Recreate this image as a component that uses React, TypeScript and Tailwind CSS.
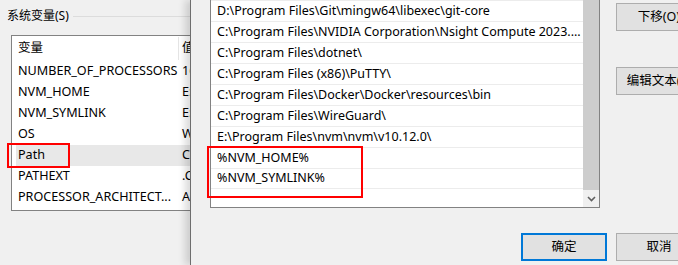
// Windows environment variables: system list behind, Path editor dialog in front
const FONT = {
  fontFamily: '"Noto Sans", "Noto Sans CJK SC", sans-serif',
};

const sysVars = [
  { name: "NUMBER_OF_PROCESSORS", value: "16" },
  { name: "NVM_HOME", value: "E:\\Program Files\\nvm\\nvm" },
  { name: "NVM_SYMLINK", value: "E:\\Program Files\\nodejs" },
  { name: "OS", value: "Windows_NT" },
  { name: "Path", value: "C:\\Windows\\system32;C:\\Windows" },
  { name: "PATHEXT", value: ".COM;.EXE;.BAT;.CMD" },
  { name: "PROCESSOR_ARCHITECT...", value: "AMD64" },
];

const paths = [
  "D:\\Program Files\\Git\\mingw64\\libexec\\git-core",
  "C:\\Program Files\\NVIDIA Corporation\\Nsight Compute 2023....",
  "C:\\Program Files\\dotnet\\",
  "C:\\Program Files (x86)\\PuTTY\\",
  "C:\\Program Files\\Docker\\Docker\\resources\\bin",
  "C:\\Program Files\\WireGuard\\",
  "E:\\Program Files\\nvm\\nvm\\v10.12.0\\",
  "%NVM_HOME%",
  "%NVM_SYMLINK%",
];

function SystemVariables() {
  return (
    <div className="pt-[8px] pl-[7px]">
      <div className="flex items-center">
        <span className="text-[12px] leading-[16px] text-black">系统变量(S)</span>
        <div className="ml-[4px] h-px flex-1 bg-[#dcdcdc]" />
      </div>
      <div className="mt-[11px] ml-[4px] h-[176px] w-[420px] border border-[#828282] bg-white">
        <div className="flex h-[25px] items-center text-[12.5px] text-black">
          <div className="flex h-[23px] w-[167px] items-center border-r border-[#e5e5e5] pl-[6px]">
            变量
          </div>
          <div className="pl-[3px]">值</div>
        </div>
        {sysVars.map((v) => (
          <div
            key={v.name}
            className={`ml-[4px] flex h-[21px] items-center text-[12.6px] text-black ${
              v.name === "Path" ? "bg-[#e8e8e8]" : ""
            }`}
          >
            <div className="w-[163px] truncate pl-[2px]">{v.name}</div>
            <div className="whitespace-nowrap pl-[3px]">{v.value}</div>
          </div>
        ))}
      </div>
      {/* highlight box around Path */}
      <div className="absolute left-[7px] top-[143px] h-[25px] w-[63px] border-2 border-[#ff0000]" />
    </div>
  );
}

function Button({ label, primary }: { label: string; primary?: boolean }) {
  return (
    <div
      className={`flex h-[28px] w-[86px] shrink-0 items-center justify-center whitespace-nowrap bg-[#e1e1e1] text-[12.5px] text-black ${
        primary ? "border-2 border-[#0078d7]" : "border border-[#adadad]"
      }`}
    >
      {label}
    </div>
  );
}

function PathEditor() {
  return (
    <div className="absolute left-[190px] top-0 flex h-[265px] w-[520px] flex-col border-l border-[#6e6e6e] bg-[#f0f0f0] shadow-[-5px_0_7px_rgba(0,0,0,0.14)]">
      <div className="flex">
        <div className="relative ml-[19px] mt-[-1px] flex h-[209px] w-[390px] shrink-0 border border-[#828282] bg-white">
          <div className="flex-1 overflow-hidden">
            {paths.map((p, i) => (
              <div
                key={p}
                className={`flex h-[21px] items-center border-t border-[#ececec] pl-[6px] text-[12.5px] text-black ${
                  i === paths.length - 1 ? "border-b" : ""
                }`}
              >
                <span className="whitespace-nowrap">{p}</span>
              </div>
            ))}
          </div>
          <div className="flex w-[16px] flex-col bg-[#f0f0f0]">
            <div className="h-[190px] bg-[#cdcdcd]" />
            <div className="flex flex-1 items-center justify-center">
              <svg width="9" height="6" viewBox="0 0 9 6">
                <path d="M1 1 L4.5 4.5 L8 1" fill="none" stroke="#606060" strokeWidth="1.6" />
              </svg>
            </div>
          </div>
          {/* highlight box around the nvm entries */}
          <div className="absolute left-[-4px] top-[146px] h-[52px] w-[156px] border-2 border-[#ff0000]" />
        </div>
        <div className="ml-[16px] flex flex-col gap-[36px] pt-[3px]">
          <Button label="下移(O)" />
          <Button label="编辑文本(T)" />
        </div>
      </div>
      <div className="mt-[25px] flex gap-[9px] pl-[330px]">
        <Button label="确定" primary />
        <Button label="取消" />
      </div>
    </div>
  );
}

export default function App() {
  return (
    <div className="relative h-[265px] w-[678px] overflow-hidden bg-[#f0f0f0]" style={FONT}>
      <SystemVariables />
      <PathEditor />
    </div>
  );
}
